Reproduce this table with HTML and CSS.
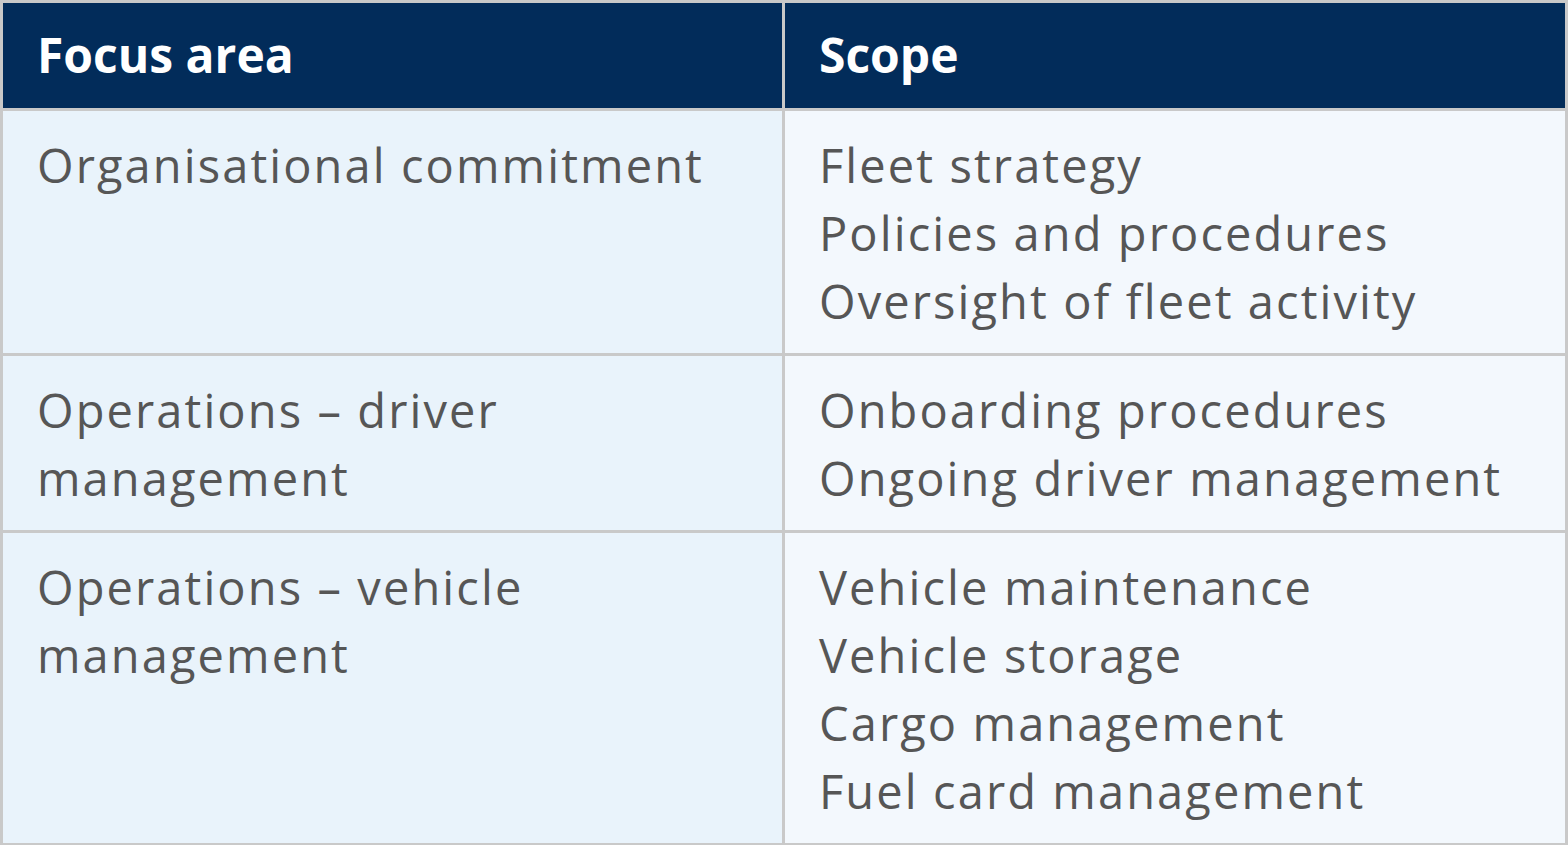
FILE: index.html
```html
<!DOCTYPE html>
<html lang="en">
<head>
<meta charset="utf-8">
<title>Fleet focus areas</title>
<link rel="stylesheet" href="styles.css">
</head>
<body>
<table class="scope-table">
  <colgroup>
    <col class="col-focus">
    <col class="col-scope">
  </colgroup>
  <thead>
    <tr>
      <th class="head-cell">Focus area</th>
      <th class="head-cell">Scope</th>
    </tr>
  </thead>
  <tbody>
    <tr>
      <td class="focus-cell">Organisational commitment</td>
      <td class="scope-cell">Fleet strategy<br>Policies and procedures<br>Oversight of fleet activity</td>
    </tr>
    <tr>
      <td class="focus-cell">Operations – driver management</td>
      <td class="scope-cell">Onboarding procedures<br>Ongoing driver management</td>
    </tr>
    <tr>
      <td class="focus-cell">Operations – vehicle management</td>
      <td class="scope-cell">Vehicle maintenance<br>Vehicle storage<br>Cargo management<br>Fuel card management</td>
    </tr>
  </tbody>
</table>
</body>
</html>
```

FILE: styles.css
```css
html, body {
  margin: 0;
  padding: 0;
  background: #ffffff;
}

.scope-table {
  width: 1568px;
  height: 845px;
  border-collapse: collapse;
  table-layout: fixed;
  border: 3px solid #c9c9c9;
  font-family: "Open Sans", "Noto Sans", sans-serif;
}

.col-focus {
  width: 782px;
}

.head-cell,
.focus-cell,
.scope-cell {
  border: 3px solid #c9c9c9;
  text-align: left;
  vertical-align: top;
  padding: 20px 30px 18px 34px;
}

.head-cell {
  background: #022c5a;
  color: #ffffff;
  font-weight: 700;
  font-size: 48px;
  line-height: 64px;
  letter-spacing: 0;
  height: 67px;
  padding-top: 18px;
  padding-bottom: 20px;
  vertical-align: middle;
}

.focus-cell,
.scope-cell {
  color: #565656;
  font-size: 47px;
  line-height: 68px;
  letter-spacing: 2.1px;
  font-weight: 400;
}

.focus-cell {
  background: #e9f3fb;
}

.scope-cell {
  background: #f3f8fd;
}
```
